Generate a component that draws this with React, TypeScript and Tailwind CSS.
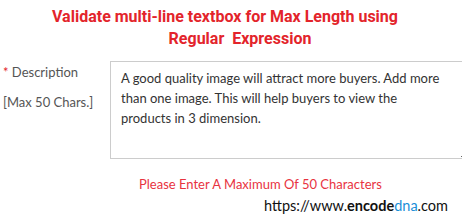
import React from 'react';

const DESCRIPTION =
  'A good quality image will attract more buyers. Add more\nthan one image. This will help buyers to view the\nproducts in 3 dimension.';

const App: React.FC = () => {
  return (
    <div className="w-[462px] h-[219px] bg-white overflow-hidden">
      {/* Title */}
      <div
        className="pt-[6px] text-[#e3242b] font-bold text-[16px] leading-[22px] text-center"
        style={{ fontFamily: 'Roboto, "Liberation Sans", sans-serif' }}
      >
        <div className="pr-[12px]">Validate multi-line textbox for Max Length using</div>
        <div className="pl-[18px]">Regular&nbsp; Expression</div>
      </div>

      {/* Form */}
      <div className="flex mt-[11px]" style={{ fontFamily: 'Lato, sans-serif' }}>
        <div className="w-[110px] shrink-0 pl-[3px] pt-[1px] text-[13px] text-[#555] leading-[20px]">
          <div>
            <span className="text-[#e3242b]">*</span> Description
          </div>
          <div className="mt-[10px]">[Max 50 Chars.]</div>
        </div>
        <textarea
          className="block w-[360px] shrink-0 h-[98px] border border-[#ccc] bg-white pl-[10px] pr-[16px] py-[6px] text-[13px] leading-[20px] text-[#333] outline-none resize"
          style={{ fontFamily: 'Lato, sans-serif' }}
          defaultValue={DESCRIPTION}
        />
      </div>

      {/* Error */}
      <div
        className="mt-[16px] pl-[139px] text-[13px] leading-[18px] text-[#e8333f]"
        style={{ fontFamily: 'Lato, sans-serif' }}
      >
        Please Enter A Maximum Of 50 Characters
      </div>

      {/* Credit */}
      <div
        className="mt-[3px] pl-[264px] text-[14.5px] leading-[20px] text-[#111]"
        style={{ fontFamily: 'Lato, sans-serif' }}
      >
        https://www.<span className="font-bold">encode</span>
        <span className="text-[#1a8fd8]">dna</span>.com
      </div>
    </div>
  );
};

export default App;
